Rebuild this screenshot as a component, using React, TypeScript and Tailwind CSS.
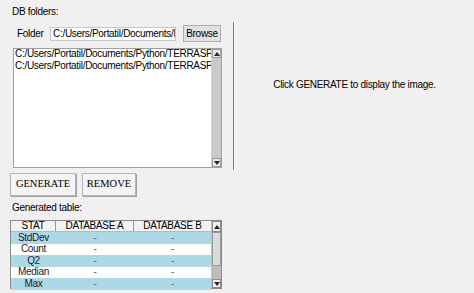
import React from "react";

const rows = [
  { stat: "StdDev", blue: true },
  { stat: "Count", blue: false },
  { stat: "Q2", blue: true },
  { stat: "Median", blue: false },
  { stat: "Max", blue: true },
];

function UpArrow() {
  return (
    <svg width="6" height="4" viewBox="0 0 6 4">
      <path d="M0 4 L3 0 L6 4 Z" fill="#222" />
    </svg>
  );
}

function DownArrow() {
  return (
    <svg width="6" height="4" viewBox="0 0 6 4">
      <path d="M0 0 L3 4 L6 0 Z" fill="#222" />
    </svg>
  );
}

export default function App() {
  return (
    <div className="flex h-[293px] w-[474px] overflow-hidden bg-[#f0f0f0] font-['Liberation_Sans',Arial,sans-serif] text-[10px] leading-none tracking-[-0.3px] text-black">
      {/* left column */}
      <div className="flex w-[226px] shrink-0 flex-col pl-[10px]">
        <div className="mt-[7px] h-[11px] pl-[2px]">DB folders:</div>

        <div className="mt-[7px] flex h-[17px] items-center">
          <span className="ml-[7px] w-[33px]">Folder</span>
          <div className="flex h-[14px] w-[126px] items-center overflow-hidden whitespace-nowrap border border-[#c8c8c8] bg-white pl-[2px]">
            C:/Users/Portatil/Documents/Python/TERRASPEC
          </div>
          <button className="ml-[7px] flex h-[17px] w-[38px] items-center justify-center border border-[#adadad] bg-[#e1e1e1]">
            Browse
          </button>
        </div>

        <div className="mt-[6px] ml-[3px] flex h-[120px] w-[209px] border border-[#a0a0a0] bg-white">
          <div className="flex-1 overflow-hidden whitespace-nowrap pl-[1px] leading-[12px]">
            <div className="-mt-[1px]">C:/Users/Portatil/Documents/Python/TERRASPECTRA</div>
            <div>C:/Users/Portatil/Documents/Python/TERRASPECTRA</div>
          </div>
          <div className="flex w-[10px] flex-col border-l border-[#d0d0d0] bg-[#c9c9c9]">
            <div className="flex h-[9px] items-center justify-center border border-[#9a9a9a] bg-[#e8e8e8]">
              <UpArrow />
            </div>
            <div className="flex-1" />
            <div className="flex h-[9px] items-center justify-center border border-[#9a9a9a] bg-[#e8e8e8]">
              <DownArrow />
            </div>
          </div>
        </div>

        <div className="mt-[5px] flex gap-[6px] font-['Liberation_Serif',serif] text-[10.5px] tracking-normal">
          <button className="h-[23px] w-[66px] border border-[#b4b4b4] bg-[#f4f4f4] shadow-[1px_1px_0_#a0a0a0]">
            GENERATE
          </button>
          <button className="h-[23px] w-[54px] border border-[#b4b4b4] bg-[#f4f4f4] shadow-[1px_1px_0_#a0a0a0]">
            REMOVE
          </button>
        </div>

        <div className="mt-[7px] pl-[2px]">Generated table:</div>

        <div className="mt-[7px] flex h-[69px] w-[212px] border border-[#8a8a8a] bg-white">
          <div className="flex flex-1 flex-col">
            <div className="grid h-[12px] grid-cols-[45px_78px_1fr] border-b border-[#b8b8b8] bg-[#f2f2f2]">
              <div className="flex items-center justify-center border-r border-[#9a9a9a]">STAT</div>
              <div className="flex items-center justify-center border-r border-[#9a9a9a]">DATABASE A</div>
              <div className="flex items-center justify-center">DATABASE B</div>
            </div>
            {rows.map((r) => (
              <div
                key={r.stat}
                className={
                  "grid h-[11.5px] shrink-0 grid-cols-[45px_78px_1fr] " +
                  (r.blue ? "bg-[#add8e6]" : "bg-white")
                }
              >
                <div className="flex items-center justify-center text-[#1a1a2a]">{r.stat}</div>
                <div className="flex items-center justify-center text-[#666]">-</div>
                <div className="flex items-center justify-center text-[#666]">-</div>
              </div>
            ))}
          </div>
          <div className="flex w-[10px] flex-col border-l border-[#c0c0c0] bg-[#bdbdbd]">
            <div className="flex h-[11px] items-center justify-center border border-[#8a8a8a] bg-[#f0f0f0]">
              <UpArrow />
            </div>
            <div className="h-[34px] border border-[#9a9a9a] bg-[#dcdcdc]" />
            <div className="flex-1" />
            <div className="flex h-[9px] items-center justify-center border border-[#8a8a8a] bg-[#f0f0f0]">
              <DownArrow />
            </div>
          </div>
        </div>
      </div>

      {/* separator */}
      <div className="ml-[7px] mt-[22px] h-[148px] w-[2px] shrink-0 border-l border-[#7a7a7a] bg-white" />

      {/* right panel */}
      <div className="flex flex-1 items-start justify-center pt-[80px]">
        <span>Click GENERATE to display the image.</span>
      </div>
    </div>
  );
}
